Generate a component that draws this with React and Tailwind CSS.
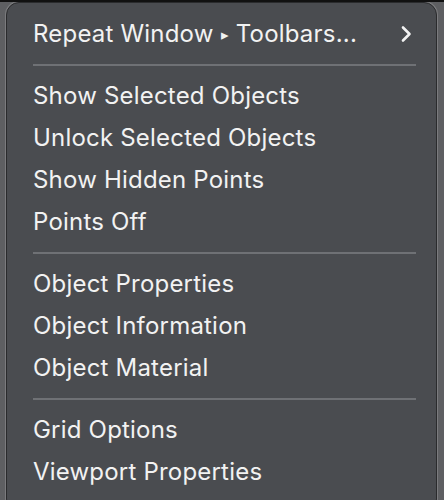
import React from "react";

function Row({ children, chevron }) {
  return (
    <div className="h-[42px] flex items-center justify-between pl-[26px] pr-[24px]">
      <span className="whitespace-nowrap">{children}</span>
      {chevron && (
        <svg width="12" height="18" viewBox="0 0 12 18">
          <polyline points="3,2.5 9.5,9 3,15.5" fill="none" stroke="#f2f2f2" strokeWidth="2.6" strokeLinecap="round" strokeLinejoin="round" />
        </svg>
      )}
    </div>
  );
}

function Sep() {
  return (
    <div className="h-[20px] flex items-center pl-[26px] pr-[20px]">
      <div className="h-[1.5px] w-full bg-[#6f7175]" />
    </div>
  );
}

export default function App() {
  return (
    <div className="w-[444px] h-[500px] overflow-hidden bg-[#5e5f62] border-t-[2px] border-[#111]">
      <div
        className="ml-[6px] w-[431px] h-[510px] rounded-[13px] bg-[#4a4c50] border border-[#2a2b2d] shadow-[0_0_0_1px_rgba(255,255,255,0.18)] pt-[10px] text-[#f2f2f2] text-[24px] tracking-[0.2px]"
        style={{ fontFamily: "Inter, 'Noto Sans', sans-serif" }}
      >
        <Row chevron>
          Repeat Window <span className="text-[15px] relative top-[-2px]">▸</span> Toolbars...
        </Row>
        <Sep />
        <Row>Show Selected Objects</Row>
        <Row>Unlock Selected Objects</Row>
        <Row>Show Hidden Points</Row>
        <Row>Points Off</Row>
        <Sep />
        <Row>Object Properties</Row>
        <Row>Object Information</Row>
        <Row>Object Material</Row>
        <Sep />
        <Row>Grid Options</Row>
        <Row>Viewport Properties</Row>
      </div>
    </div>
  );
}
